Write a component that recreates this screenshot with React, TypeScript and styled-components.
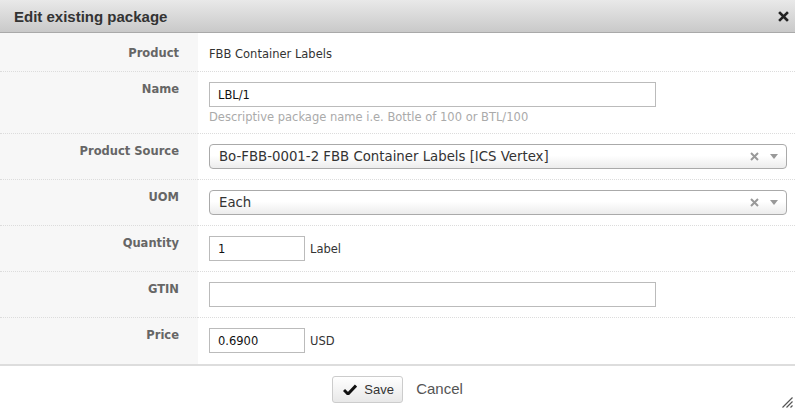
import React from "react";
import styled, { createGlobalStyle } from "styled-components";

const GlobalStyle = createGlobalStyle`
  html, body {
    margin: 0;
    padding: 0;
    background: #fff;
  }
  body {
    font-family: "DejaVu Sans", Verdana, sans-serif;
    font-size: 11.5px;
    color: #333;
  }
`;

const Dialog = styled.div`
  width: 795px;
  height: 412px;
  display: flex;
  flex-direction: column;
  background: #fff;
  overflow: hidden;
`;

const TitleBar = styled.div`
  height: 32px;
  display: flex;
  align-items: center;
  justify-content: space-between;
  padding: 0 6px 0 14px;
  background: linear-gradient(180deg, #e9e9e9 0%, #c9c9c9 100%);
  border-bottom: 1px solid #a9a9a9;
`;

const Title = styled.h1`
  margin: 0;
  font-family: "Liberation Sans", Arial, sans-serif;
  font-size: 15px;
  font-weight: bold;
  color: #333;
`;

const CloseButton = styled.button`
  border: 0;
  background: none;
  padding: 0;
  margin-top: 1px;
  width: 11px;
  height: 11px;
  display: flex;
  cursor: pointer;
`;

const Form = styled.div`
  flex: 1;
  display: grid;
  grid-template-columns: 198px 1fr;
  align-content: start;
  background: linear-gradient(90deg, #f7f7f7 0, #f7f7f7 198px, #fff 198px);
`;

const Label = styled.div<{ $first?: boolean }>`
  text-align: right;
  font-weight: bold;
  color: #666;
  line-height: 16px;
  padding: ${(p) => (p.$first ? "12px" : "9px")} 19px 0 0;
  border-top: ${(p) => (p.$first ? "0" : "1px dotted #dcdcdc")};
`;

const Value = styled.div<{ $first?: boolean }>`
  display: flex;
  flex-direction: column;
  align-items: flex-start;
  padding: ${(p) => (p.$first ? "13px 8px 9px 11px" : "10px 8px 10px 11px")};
  border-top: ${(p) => (p.$first ? "0" : "1px dotted #dcdcdc")};
  line-height: 16px;
  color: #333;
`;

const InputRow = styled.div`
  display: flex;
  align-items: center;
  gap: 5px;
  color: #333;
`;

const TextInput = styled.input<{ $w: number }>`
  box-sizing: border-box;
  width: ${(p) => p.$w}px;
  height: 25px;
  border: 1px solid #bbb;
  border-radius: 0;
  padding: 0 8px;
  font-family: "DejaVu Sans", Verdana, sans-serif;
  font-size: 11.5px;
  color: #111;
  outline: none;
`;

const Help = styled.div`
  margin: 2px 0 -2px;
  color: #aaa;
  line-height: 16px;
`;

const Select = styled.div`
  box-sizing: border-box;
  width: 100%;
  height: 25px;
  display: flex;
  align-items: center;
  padding: 0 8px 0 9px;
  border: 1px solid #aaa;
  border-radius: 4px;
  background: linear-gradient(180deg, #fff 0%, #fff 45%, #ececec 100%);
  font-size: 13.3px;
  color: #333;
`;

const SelectText = styled.span`
  flex: 1;
`;

const SelectIcons = styled.span`
  display: flex;
  align-items: center;
  gap: 11px;
  color: #999;
`;

const Footer = styled.div`
  height: 46px;
  border-top: 2px solid #ddd;
  display: flex;
  align-items: center;
  justify-content: center;
  gap: 13px;
  position: relative;
`;

const SaveButton = styled.button`
  box-sizing: border-box;
  width: 71px;
  height: 27px;
  display: flex;
  align-items: center;
  justify-content: center;
  gap: 7px;
  border: 1px solid #ccc;
  border-radius: 3px;
  background: linear-gradient(180deg, #fff 0%, #e8e8e8 100%);
  font-family: "Liberation Sans", Arial, sans-serif;
  font-size: 13px;
  color: #333;
  padding: 0 0 0 2px;
`;

const CancelLink = styled.a`
  font-family: "Liberation Sans", Arial, sans-serif;
  font-size: 15px;
  color: #555;
  text-decoration: none;
  margin-bottom: 2px;
`;

const Grip = styled.span`
  position: absolute;
  right: 2px;
  bottom: 4px;
  width: 11px;
  height: 11px;
  display: flex;
`;

const ClearIcon = () => (
  <svg width="9" height="9" viewBox="0 0 9 9">
    <path d="M1 1 L8 8 M8 1 L1 8" stroke="#999" strokeWidth="2" />
  </svg>
);

const ArrowIcon = () => (
  <svg width="8" height="5" viewBox="0 0 8 5">
    <path d="M0 0 H8 L4 5 Z" fill="#999" />
  </svg>
);

const Dropdown = ({ text }: { text: string }) => (
  <Select>
    <SelectText>{text}</SelectText>
    <SelectIcons>
      <ClearIcon />
      <ArrowIcon />
    </SelectIcons>
  </Select>
);

export default function App() {
  return (
    <>
      <GlobalStyle />
      <Dialog>
        <TitleBar>
          <Title>Edit existing package</Title>
          <CloseButton aria-label="close">
            <svg width="11" height="11" viewBox="0 0 11 11">
              <path d="M2 2 L9 9 M9 2 L2 9" stroke="#222" strokeWidth="2.6" strokeLinecap="square" />
            </svg>
          </CloseButton>
        </TitleBar>
        <Form>
          <Label $first>Product</Label>
          <Value $first>FBB Container Labels</Value>

          <Label>Name</Label>
          <Value>
            <TextInput $w={447} defaultValue="LBL/1" />
            <Help>Descriptive package name i.e. Bottle of 100 or BTL/100</Help>
          </Value>

          <Label>Product Source</Label>
          <Value>
            <Dropdown text="Bo-FBB-0001-2 FBB Container Labels [ICS Vertex]" />
          </Value>

          <Label>UOM</Label>
          <Value>
            <Dropdown text="Each" />
          </Value>

          <Label>Quantity</Label>
          <Value>
            <InputRow>
              <TextInput $w={96} defaultValue="1" />
              Label
            </InputRow>
          </Value>

          <Label>GTIN</Label>
          <Value>
            <TextInput $w={447} defaultValue="" />
          </Value>

          <Label>Price</Label>
          <Value>
            <InputRow>
              <TextInput $w={96} defaultValue="0.6900" />
              USD
            </InputRow>
          </Value>
        </Form>
        <Footer>
          <SaveButton>
            <svg width="14" height="11" viewBox="0 0 14 11">
              <path d="M1 6 L5 10 L13 1.5" stroke="#111" strokeWidth="3" fill="none" />
            </svg>
            Save
          </SaveButton>
          <CancelLink href="#">Cancel</CancelLink>
          <Grip>
            <svg width="11" height="11" viewBox="0 0 11 11">
              <path d="M10.5 0.5 L0.5 10.5 M10.5 4.5 L4.5 10.5 M10.5 8.5 L8.5 10.5" stroke="#555" strokeWidth="1.2" fill="none" />
            </svg>
          </Grip>
        </Footer>
      </Dialog>
    </>
  );
}
